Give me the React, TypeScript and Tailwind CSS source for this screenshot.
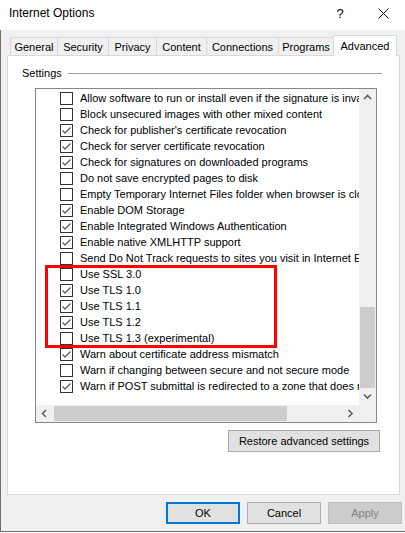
import React from "react";

type Item = { label: string; checked: boolean };

const items: Item[] = [
  { label: "Allow software to run or install even if the signature is invalid", checked: false },
  { label: "Block unsecured images with other mixed content", checked: false },
  { label: "Check for publisher's certificate revocation", checked: true },
  { label: "Check for server certificate revocation", checked: true },
  { label: "Check for signatures on downloaded programs", checked: true },
  { label: "Do not save encrypted pages to disk", checked: false },
  { label: "Empty Temporary Internet Files folder when browser is closed", checked: false },
  { label: "Enable DOM Storage", checked: true },
  { label: "Enable Integrated Windows Authentication", checked: true },
  { label: "Enable native XMLHTTP support", checked: true },
  { label: "Send Do Not Track requests to sites you visit in Internet Explorer", checked: false },
  { label: "Use SSL 3.0", checked: false },
  { label: "Use TLS 1.0", checked: true },
  { label: "Use TLS 1.1", checked: true },
  { label: "Use TLS 1.2", checked: true },
  { label: "Use TLS 1.3 (experimental)", checked: false },
  { label: "Warn about certificate address mismatch", checked: true },
  { label: "Warn if changing between secure and not secure mode", checked: false },
  { label: "Warn if POST submittal is redirected to a zone that does not permit posts", checked: true },
];

const tabs: { label: string; w: string }[] = [
  { label: "General", w: "w-[47px]" },
  { label: "Security", w: "w-[51px]" },
  { label: "Privacy", w: "w-[48px]" },
  { label: "Content", w: "w-[50px]" },
  { label: "Connections", w: "w-[72px]" },
  { label: "Programs", w: "w-[55px]" },
];

function CheckBox({ checked }: { checked: boolean }) {
  return (
    <div className="w-[13px] h-[13px] shrink-0 border border-[#333333] bg-white flex items-center justify-center">
      {checked && (
        <svg width="11" height="11" viewBox="0 0 11 11">
          <polyline points="1.5,5.5 4,8 9.5,2.5" fill="none" stroke="#4a4a4a" strokeWidth="1.1" />
        </svg>
      )}
    </div>
  );
}

function Chevron({ dir }: { dir: "up" | "down" | "left" | "right" }) {
  const pts: Record<string, string> = {
    up: "1,5 4.5,1.5 8,5",
    down: "1,1.5 4.5,5 8,1.5",
    left: "5,1 1.5,4.5 5,8",
    right: "1.5,1 5,4.5 1.5,8",
  };
  const vertical = dir === "up" || dir === "down";
  return (
    <svg
      width={vertical ? 9 : 7}
      height={vertical ? 7 : 9}
      viewBox={vertical ? "0 0 9 7" : "0 0 7 9"}
    >
      <polyline points={pts[dir]} fill="none" stroke="#606060" strokeWidth="1.6" />
    </svg>
  );
}

export default function App() {
  return (
    <div className="w-[405px] h-[533px] bg-white overflow-hidden font-['Liberation_Sans',Arial,sans-serif] text-black">
      {/* Title bar */}
      <div className="h-[30px] bg-white flex items-start">
        <div className="pl-[9px] pt-[6px] text-[12px] leading-[15px]">Internet Options</div>
        <div className="ml-auto flex h-[27px]">
          <div className="w-[46px] flex items-center justify-center text-[13px] leading-none pb-[1px]">?</div>
          <div className="w-[42px] flex items-center justify-center pr-[1px]">
            <svg width="11" height="11" viewBox="0 0 11 11">
              <line x1="0.5" y1="0.5" x2="10.5" y2="10.5" stroke="#111" strokeWidth="1" />
              <line x1="10.5" y1="0.5" x2="0.5" y2="10.5" stroke="#111" strokeWidth="1" />
            </svg>
          </div>
        </div>
      </div>

      {/* Window body */}
      <div className="h-[502px] bg-[#f0f0f0] border-l border-b border-[#6e6e6e] flex flex-col pl-[6px]">
        {/* Tabs */}
        <div className="mt-[5px] ml-[3px] h-[21px] mb-[-1px] flex items-end relative z-10 text-[11px]">
          {tabs.map((t) => (
            <div
              key={t.label}
              className={`${t.w} h-[18px] mb-[1px] border-l border-t border-[#d9d9d9] bg-[#f0f0f0] flex items-center justify-center pt-[1px] whitespace-nowrap`}
            >
              {t.label}
            </div>
          ))}
          <div className="w-[64px] h-[21px] border-l border-t border-r border-[#d9d9d9] bg-white flex items-center justify-center whitespace-nowrap">
            Advanced
          </div>
        </div>

        {/* Panel */}
        <div className="w-[393px] h-[440px] border border-[#d9d9d9] bg-white flex flex-col text-[11px]">
          <div className="mt-[9px] h-[16px] pl-[14px] pr-[17px] flex items-center gap-[6px]">
            <span className="leading-[16px]">Settings</span>
            <div className="flex-1 h-px bg-[#a0a0a0]" />
          </div>

          {/* List box */}
          <div className="mt-[7px] ml-[27px] w-[342px] h-[335px] border border-[#828790] relative grid grid-cols-[minmax(0,1fr)_17px] grid-rows-[minmax(0,1fr)_17px]">
            <div className="overflow-hidden bg-white pt-[1px]">
              {items.map((it) => (
                <div key={it.label} className="h-[16px] flex items-center pl-[24px] gap-[7px] whitespace-nowrap leading-[16px]">
                  <CheckBox checked={it.checked} />
                  <span>{it.label}</span>
                </div>
              ))}
            </div>
            {/* vertical scrollbar */}
            <div className="bg-[#f0f0f0] flex flex-col">
              <div className="h-[17px] flex items-center justify-center">
                <Chevron dir="up" />
              </div>
              <div className="flex-1 flex flex-col justify-end">
                <div className="h-[81px] mx-[1px] bg-[#cdcdcd]" />
              </div>
              <div className="h-[17px] flex items-center justify-center">
                <Chevron dir="down" />
              </div>
            </div>
            {/* horizontal scrollbar */}
            <div className="bg-[#f0f0f0] flex">
              <div className="w-[17px] flex items-center justify-center">
                <Chevron dir="left" />
              </div>
              <div className="flex-1 flex">
                <div className="ml-[1px] w-[233px] my-[1px] bg-[#cdcdcd]" />
              </div>
              <div className="w-[17px] flex items-center justify-center">
                <Chevron dir="right" />
              </div>
            </div>
            <div className="bg-[#f0f0f0]" />

            {/* Red highlight */}
            <div className="absolute left-[9px] top-[176px] w-[232px] h-[83px] border-[3px] border-[#ff0000] pointer-events-none" />
          </div>

          <div className="mt-[7px] self-end mr-[19px] w-[152px] h-[22px] border border-[#adadad] bg-[#e1e1e1] flex items-center justify-center whitespace-nowrap">
            Restore advanced settings
          </div>
        </div>

        {/* Dialog buttons */}
        <div className="mt-[7px] flex justify-end gap-[7px] pr-[3px] text-[11px]">
          <div className="w-[74px] h-[22px] border-2 border-[#0078d7] bg-[#e1e1e1] flex items-center justify-center">OK</div>
          <div className="w-[74px] h-[22px] border border-[#adadad] bg-[#e1e1e1] flex items-center justify-center">Cancel</div>
          <div className="w-[74px] h-[22px] border border-[#bfbfbf] bg-[#cccccc] text-[#838383] flex items-center justify-center">Apply</div>
        </div>
      </div>
    </div>
  );
}
